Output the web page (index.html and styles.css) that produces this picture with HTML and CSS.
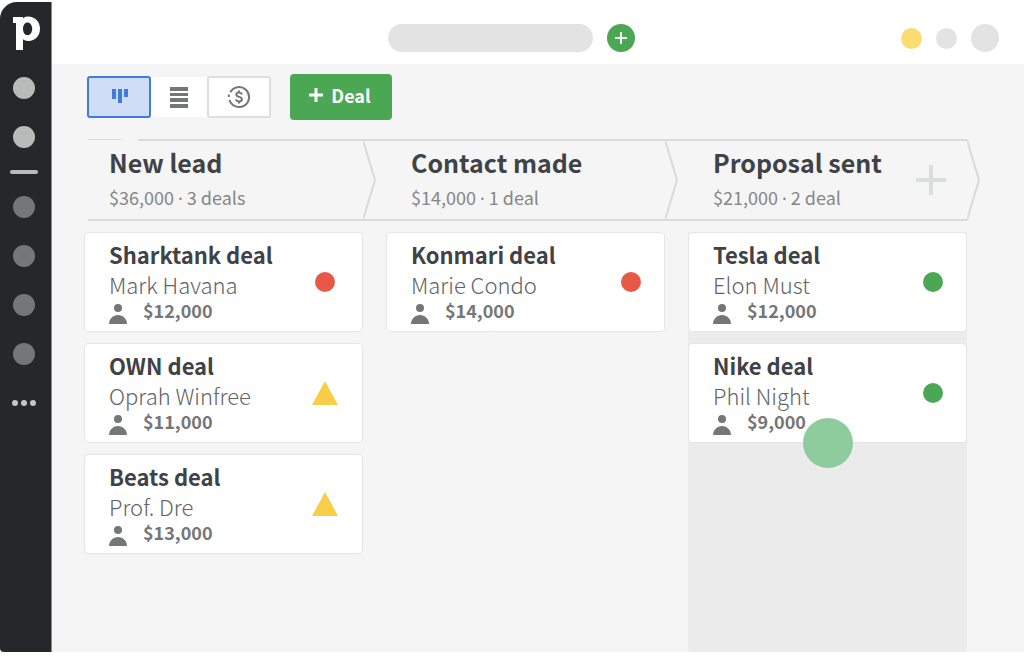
FILE: index.html
```html
<!DOCTYPE html>
<html lang="en">
<head>
<meta charset="utf-8">
<title>Deals pipeline</title>
<link rel="stylesheet" href="styles.css">
</head>
<body>
<svg class="sprite" aria-hidden="true">
  <symbol id="person" viewBox="0 0 18 20"><circle cx="9" cy="4" r="4"/><path d="M0 20c0-5 4-9 9-9s9 4 9 9z"/></symbol>
  <symbol id="triangle" viewBox="0 0 26 24"><path d="M13 0 26 24H0z"/></symbol>
  <symbol id="chevron" viewBox="0 0 14 82"><path d="M0 1 12 41 0 81"/></symbol>
</svg>
<div class="app">
  <nav class="sidebar" aria-label="Main">
    <svg class="logo" viewBox="0 0 28 36" aria-label="Logo">
      <rect x="4" y="2" width="7" height="33"/>
      <rect x="1" y="2" width="7" height="6"/>
      <path fill-rule="evenodd" d="M16 1.500c7 0 12 5 12 12.300S23 26 16.500 26C13 26 10 24 8 21V7c2-3.500 4.500-5.500 8-5.500zM15.500 7.500C13 7.500 11 10 11 13.800s2 6.400 4.500 6.400 4.700-2.600 4.700-6.400-2.200-6.300-4.700-6.300z"/>
    </svg>
    <div class="nav-group">
      <a class="nav-dot light" href="#" aria-label="Deals"></a>
      <a class="nav-dot light" href="#" aria-label="Mail"></a>
    </div>
    <span class="nav-line"></span>
    <div class="nav-group">
      <a class="nav-dot" href="#" aria-label="Activities"></a>
      <a class="nav-dot" href="#" aria-label="Contacts"></a>
      <a class="nav-dot" href="#" aria-label="Insights"></a>
      <a class="nav-dot" href="#" aria-label="Products"></a>
    </div>
    <a class="nav-more" href="#" aria-label="More"><i></i><i></i><i></i></a>
  </nav>
  <div class="page">
    <header class="topbar">
      <div class="search-group">
        <input class="search" type="search" aria-label="Search">
        <button class="add" aria-label="Quick add"><svg viewBox="0 0 12 12"><path d="M6 0v12M0 6h12"/></svg></button>
      </div>
      <div class="account">
        <button class="spot yellow" aria-label="Tips"></button>
        <button class="spot" aria-label="Help"></button>
        <button class="spot large" aria-label="Profile"></button>
      </div>
    </header>
    <main class="content">
      <div class="toolbar">
        <div class="views">
          <button class="view active" aria-label="Pipeline view"><svg width="18" height="16" viewBox="0 0 18 16"><path d="M1 1h4v10H1zM7 1h4v14H7zM13 1h4v8h-4z"/></svg></button>
          <button class="view list" aria-label="List view"><svg width="18" height="21" viewBox="0 0 18 21"><path d="M0 0h18v4H0zM0 6h18v3H0zM0 11h18v4H0zM0 17h18v4H0z"/></svg></button>
          <button class="view" aria-label="Forecast view"><svg class="coin" width="24" height="24" viewBox="0 0 24 24"><path d="M3.300 7.200A10 10 0 1 1 2.500 15M1.800 9.500v2.500"/><path d="M15 9.500c-.5-1.300-1.500-1.900-3-1.900-1.700 0-2.700.8-2.700 2 0 3 5.600 1.600 5.600 4.600 0 1.300-1.100 2.200-2.900 2.200-1.600 0-2.700-.7-3.200-2M12 5.500v2.500M12 16v2.500"/></svg></button>
        </div>
        <button class="new-deal"><svg width="14" height="14" viewBox="0 0 14 14"><path d="M7 0v14M0 7h14"/></svg>Deal</button>
      </div>
      <div class="stages">
        <section class="stage">
          <h2>New lead</h2><p>$36,000 <span class="sep">·</span> 3 deals</p>
          <svg class="chevron"><use href="#chevron"/></svg>
        </section>
        <section class="stage">
          <h2>Contact made</h2><p>$14,000 <span class="sep">·</span> 1 deal</p>
          <svg class="chevron"><use href="#chevron"/></svg>
        </section>
        <section class="stage">
          <h2>Proposal sent</h2><p>$21,000 <span class="sep">·</span> 2 deal</p>
          <button class="add-stage" aria-label="Add deal"><svg viewBox="0 0 30 30"><path d="M15 0v30M0 15h30"/></svg></button>
          <svg class="chevron"><use href="#chevron"/></svg>
        </section>
      </div>
      <div class="board">
        <div class="column first">
          <article class="card">
            <div><h3>Sharktank deal</h3><p class="who">Mark Havana</p><p class="amount"><svg><use href="#person"/></svg>$12,000</p></div>
            <span class="status"><i class="dot red"></i></span>
          </article>
          <article class="card">
            <div><h3>OWN deal</h3><p class="who">Oprah Winfree</p><p class="amount"><svg><use href="#person"/></svg>$11,000</p></div>
            <span class="status"><svg class="warn"><use href="#triangle"/></svg></span>
          </article>
          <article class="card">
            <div><h3>Beats deal</h3><p class="who">Prof. Dre</p><p class="amount"><svg><use href="#person"/></svg>$13,000</p></div>
            <span class="status"><svg class="warn"><use href="#triangle"/></svg></span>
          </article>
        </div>
        <div class="column">
          <article class="card">
            <div><h3>Konmari deal</h3><p class="who">Marie Condo</p><p class="amount"><svg><use href="#person"/></svg>$14,000</p></div>
            <span class="status"><i class="dot red"></i></span>
          </article>
        </div>
        <div class="column target">
          <article class="card">
            <div><h3>Tesla deal</h3><p class="who">Elon Must</p><p class="amount"><svg><use href="#person"/></svg>$12,000</p></div>
            <span class="status"><i class="dot green"></i></span>
          </article>
          <article class="card">
            <div><h3>Nike deal</h3><p class="who">Phil Night</p><p class="amount"><svg><use href="#person"/></svg>$9,000</p></div>
            <span class="status"><i class="dot green"></i></span>
            <span class="touch"></span>
          </article>
        </div>
      </div>
    </main>
  </div>
</div>
</body>
</html>
```
FILE: styles.css
```css
* { box-sizing: border-box; }
body {
  margin: 0;
  background: #fff;
  color: #3f4246;
  font-family: "Noto Sans CJK SC", "Noto Sans", sans-serif;
}
h2, h3, p { margin: 0; }
button, input { margin: 0; padding: 0; border: 0; font: inherit; }
button { cursor: pointer; }
svg { display: block; }
.sprite { position: absolute; width: 0; height: 0; }

.app { display: flex; min-height: 100vh; padding-bottom: 4px; }

/* Sidebar */
.sidebar {
  width: 52px;
  margin-top: 2px;
  padding: 13px 3px 0 0;
  flex: none;
  display: flex;
  flex-direction: column;
  align-items: center;
  background: #26272b;
  border-right: 1px solid #8b8b8d;
  border-radius: 17px 0 0 4px;
}
.logo { width: 28px; height: 36px; margin: 0 0 26px 4px; fill: #fff; }
.nav-group { display: flex; flex-direction: column; gap: 27px; }
.nav-dot { width: 22px; height: 22px; border-radius: 50%; background: #757678; }
.nav-dot.light { background: #b9bbba; }
.nav-line { width: 28px; height: 4px; margin: 22px 0; border-radius: 2px; background: #b9bbba; }
.nav-more { display: flex; gap: 3px; margin-top: 35px; }
.nav-more i { width: 6px; height: 6px; border-radius: 50%; background: #c4c5c5; }

/* Top bar */
.page { flex: 1; min-width: 0; display: flex; flex-direction: column; }
.topbar {
  display: grid;
  grid-template-columns: 12fr auto 13fr;
  align-items: center;
  height: 64px;
  padding: 12px 25px 0 0;
}
.search-group { grid-column: 2; display: flex; gap: 14px; }
.search { width: 205px; height: 28px; border-radius: 14px; background: #e3e3e3; appearance: none; }
.add { width: 28px; height: 28px; padding: 8px; border-radius: 50%; background: #4ca754; }
.add svg { width: 12px; height: 12px; fill: none; stroke: #f1f5f1; stroke-width: 2; }
.account { display: flex; align-items: center; justify-content: flex-end; gap: 14px; }
.spot { width: 21px; height: 21px; border-radius: 50%; background: #e3e3e3; }
.spot.yellow { background: #fbdc70; }
.spot.large { width: 28px; height: 28px; }

/* Content */
.content { flex: 1; display: flex; flex-direction: column; padding: 10px 57px 0 32px; background: #f5f5f5; }
.toolbar { display: flex; align-items: center; gap: 19px; padding-left: 3px; }
.views { display: flex; align-items: center; }
.view {
  display: grid;
  place-items: center;
  width: 64px;
  height: 42px;
  border: 2px solid #dedede;
  border-radius: 3px;
  background: #fff;
  fill: #757678;
}
.view.active { border-color: #3f7be0; background: #cfddf6; fill: #3f7be0; padding: 0 0 2px 2px; }
.view.list { width: 56px; height: 40px; border: 0; border-radius: 0; }
.coin { fill: none; stroke: #757678; stroke-width: 2; }
.new-deal {
  display: flex;
  align-items: center;
  justify-content: center;
  gap: 8px;
  width: 102px;
  height: 46px;
  padding: 0 2px 4px 0;
  border-radius: 4px;
  background: #4ca754;
  color: #fff;
  font-size: 18px;
  font-weight: 700;
  line-height: 24px;
}
.new-deal svg { stroke: #fff; stroke-width: 3; }

/* Stage header */
.stages, .board { display: grid; grid-template-columns: repeat(3, minmax(0, 1fr)); gap: 23px; }
.stages { position: relative; height: 82px; margin-top: 19px; }
.stages::before {
  content: "";
  position: absolute;
  inset: 0 0 0 4px;
  background:
    linear-gradient(#dadada, #dadada) 0 0 / 33px 1px no-repeat,
    linear-gradient(90deg, transparent 50px, #dadada 50px) 0 0 / 100% 2px no-repeat,
    linear-gradient(#dadada, #dadada) 0 100% / 100% 2px no-repeat;
}
.stage { position: relative; padding: 6px 0 0 25px; }
.stage h2 { font-size: 25px; line-height: 34px; font-weight: 700; }
.stage p { font-size: 18px; line-height: 36px; color: #858686; }
.sep { font-family: "Noto Sans", sans-serif; }
.chevron { position: absolute; top: 0; left: 100%; width: 14px; height: 82px; fill: none; stroke: #dadada; stroke-width: 2; }
.add-stage { position: absolute; right: 21px; top: 26px; background: none; }
.add-stage svg { width: 30px; height: 30px; stroke: #d9dddb; stroke-width: 4; }

/* Deal board */
.board { flex: 1; margin-top: 11px; }
.column { display: flex; flex-direction: column; gap: 11px; }
.column.target { background: #ebebeb; border-radius: 0 0 4px 4px; }
.card {
  position: relative;
  display: flex;
  align-items: center;
  justify-content: space-between;
  padding: 7px 20px 7px 24px;
  border: 1px solid #e6e6e6;
  border-radius: 4px;
  background: #fff;
}
.first .card { padding-right: 24px; }
.card h3 { font-size: 22px; line-height: 28px; font-weight: 700; }
.who { font-size: 22px; line-height: 32px; font-weight: 300; color: #626364; }
.amount { display: flex; gap: 16px; font-size: 18px; line-height: 20px; font-weight: 700; color: #757678; }
.amount svg { width: 18px; height: 20px; margin-top: 4px; fill: #757678; }
.status { display: grid; place-items: center; width: 26px; height: 24px; }
.dot { width: 20px; height: 20px; border-radius: 50%; }
.red { background: #e85846; }
.green { background: #4ca754; }
.warn { width: 26px; height: 24px; fill: #f8cd48; }
.touch { position: absolute; right: 113px; bottom: -26px; width: 50px; height: 50px; border-radius: 50%; background: #8fcc9d; }
```
